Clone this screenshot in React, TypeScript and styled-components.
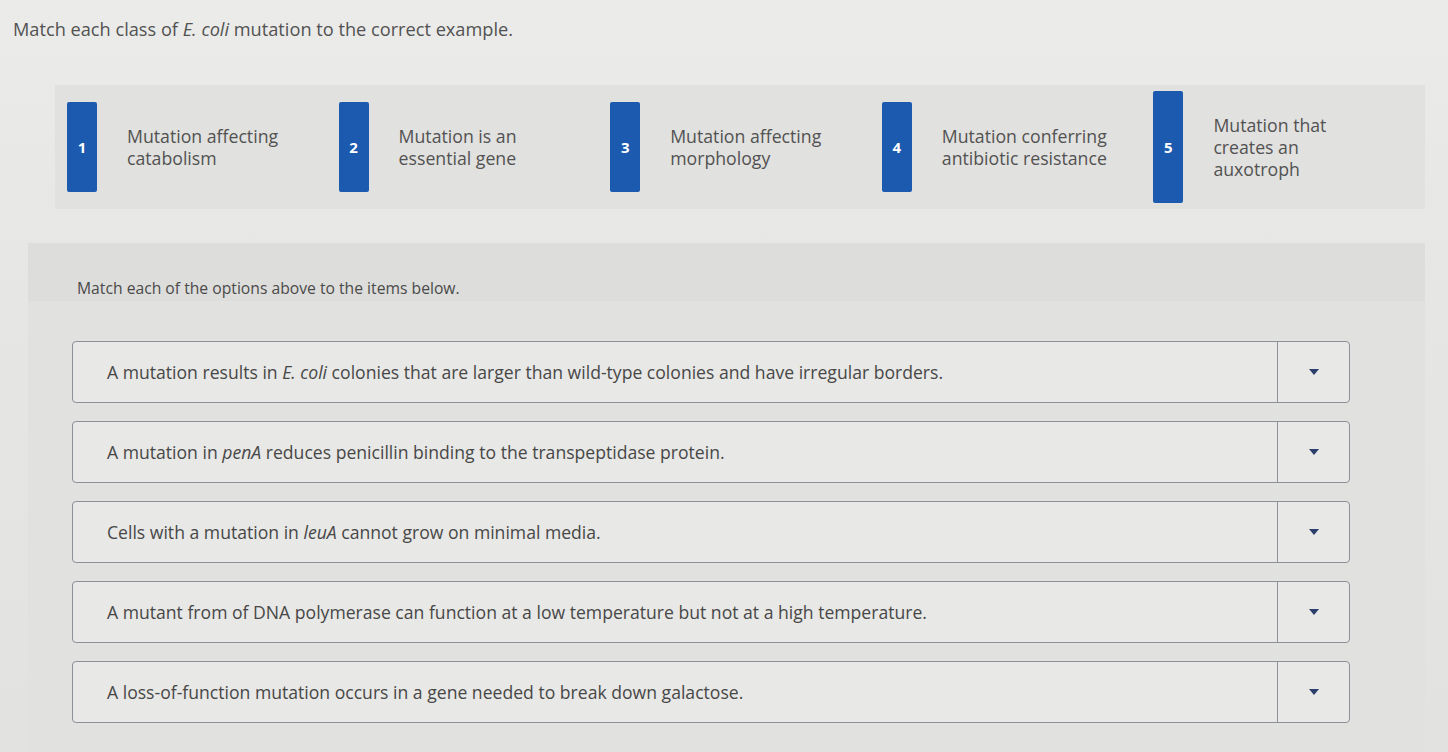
import React from "react";
import styled, { createGlobalStyle } from "styled-components";

const GlobalStyle = createGlobalStyle`
  html, body {
    margin: 0;
    padding: 0;
    background: #e7e7e5;
  }
  body {
    font-family: "Open Sans", Lato, "Liberation Sans", sans-serif;
    color: #4a4a4a;
  }
`;

const Page = styled.div`
  width: 1448px;
  height: 752px;
  overflow: hidden;
  box-sizing: border-box;
  padding: 15px 0 0 0;
  background: linear-gradient(180deg, #ebebea 0%, #e6e6e4 40%, #e2e2e0 100%);
`;

const Title = styled.h1`
  margin: 0 0 0 13px;
  font-size: 18.2px;
  font-weight: 400;
  line-height: 28px;
  color: #525252;
`;

const OptionStrip = styled.div`
  margin: 42px 23px 0 55px;
  padding: 6px 0 6px 12px;
  background: #e1e1df;
  display: grid;
  grid-template-columns: repeat(5, 1fr);
  align-items: center;
`;

const Option = styled.div`
  display: flex;
  align-items: stretch;
  gap: 30px;
`;

const Tab = styled.div`
  width: 30px;
  flex: none;
  background: #1b5aae;
  border-radius: 2px;
  color: #fff;
  font-weight: 700;
  font-size: 15px;
  display: flex;
  align-items: center;
  justify-content: center;
`;

const OptionText = styled.div<{ $width: number }>`
  max-width: ${({ $width }) => $width}px;
  padding: 23px 0;
  font-size: 17.7px;
  line-height: 22px;
  color: #525252;
  display: flex;
  align-items: center;
`;

const Panel = styled.section`
  margin: 34px 23px 0 28px;
  background: #e1e1df;
  height: 600px;
`;

const PanelHeader = styled.div`
  padding: 34px 49px 0;
  height: 58px;
  box-sizing: border-box;
  background: #dddddb;
  font-size: 15.7px;
  color: #4a4a4a;
`;

const Rows = styled.div`
  display: flex;
  flex-direction: column;
  gap: 18px;
  padding: 40px 75px 0 44px;
`;

const Row = styled.div`
  display: grid;
  grid-template-columns: 1fr 72px;
  height: 62px;
  box-sizing: border-box;
  border: 1.5px solid #8c9098;
  border-radius: 4px;
  background: #e8e8e6;
`;

const RowText = styled.div`
  display: flex;
  align-items: center;
  padding-left: 34px;
  font-size: 17.6px;
  color: #474747;
`;

const Select = styled.div`
  border-left: 1.5px solid #8c9098;
  display: flex;
  align-items: center;
  justify-content: center;
`;

const Caret = styled.span`
  width: 0;
  height: 0;
  border-left: 5px solid transparent;
  border-right: 5px solid transparent;
  border-top: 6px solid #2b3d6b;
`;

const options = [
  { label: "Mutation affecting catabolism", width: 175 },
  { label: "Mutation is an essential gene", width: 150 },
  { label: "Mutation affecting morphology", width: 175 },
  { label: "Mutation conferring antibiotic resistance", width: 200 },
  { label: "Mutation that creates an auxotroph", width: 130 },
];

const items: React.ReactNode[] = [
  <>A mutation results in <i>E. coli</i> colonies that are larger than wild-type colonies and have irregular borders.</>,
  <>A mutation in <i>penA</i> reduces penicillin binding to the transpeptidase protein.</>,
  <>Cells with a mutation in <i>leuA</i> cannot grow on minimal media.</>,
  <>A mutant from of DNA polymerase can function at a low temperature but not at a high temperature.</>,
  <>A loss-of-function mutation occurs in a gene needed to break down galactose.</>,
];

export default function App() {
  return (
    <Page>
      <GlobalStyle />
      <Title>
        Match each class of <i>E. coli</i> mutation to the correct example.
      </Title>

      <OptionStrip>
        {options.map((opt, i) => (
          <Option key={opt.label}>
            <Tab>{i + 1}</Tab>
            <OptionText $width={opt.width}>{opt.label}</OptionText>
          </Option>
        ))}
      </OptionStrip>

      <Panel>
        <PanelHeader>Match each of the options above to the items below.</PanelHeader>
        <Rows>
          {items.map((text, i) => (
            <Row key={i}>
              <RowText>
                <span>{text}</span>
              </RowText>
              <Select>
                <Caret />
              </Select>
            </Row>
          ))}
        </Rows>
      </Panel>
    </Page>
  );
}
